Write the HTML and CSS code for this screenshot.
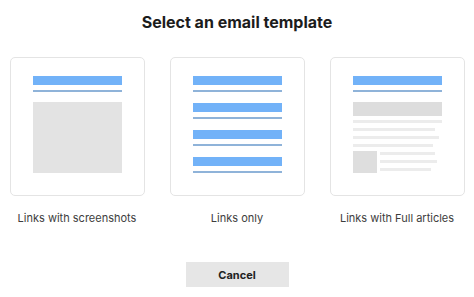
FILE: index.html
```html
<!DOCTYPE html>
<html>
<head>
<meta charset="utf-8">
<link rel="stylesheet" href="styles.css">
</head>
<body>
<div class="dialog">
  <h1 class="title">Select an email template</h1>
  <div class="options">
    <div class="option">
      <div class="card">
        <div class="bar"></div>
        <div class="thin"></div>
        <div class="shot"></div>
      </div>
      <div class="label">Links with screenshots</div>
    </div>
    <div class="option">
      <div class="card">
        <div class="group"><div class="bar"></div><div class="thin"></div></div>
        <div class="group"><div class="bar"></div><div class="thin"></div></div>
        <div class="group"><div class="bar"></div><div class="thin"></div></div>
        <div class="group"><div class="bar"></div><div class="thin"></div></div>
      </div>
      <div class="label">Links only</div>
    </div>
    <div class="option">
      <div class="card">
        <div class="bar"></div>
        <div class="thin"></div>
        <div class="headline"></div>
        <div class="lines">
          <div class="line" style="width:89px"></div>
          <div class="line" style="width:82px"></div>
          <div class="line" style="width:86px"></div>
          <div class="line" style="width:80px"></div>
        </div>
        <div class="media">
          <div class="thumb"></div>
          <div class="mlines">
            <div class="line" style="width:55px"></div>
            <div class="line" style="width:57px"></div>
            <div class="line" style="width:51px"></div>
          </div>
        </div>
      </div>
      <div class="label">Links with Full articles</div>
    </div>
  </div>
  <div class="actions">
    <button class="cancel">Cancel</button>
  </div>
</div>
</body>
</html>
```
FILE: styles.css
```css
html, body {
  margin: 0;
  padding: 0;
  background: #ffffff;
}
body {
  font-family: Inter, "Liberation Sans", sans-serif;
  width: 474px;
  height: 297px;
  overflow: hidden;
}
.dialog {
  display: flex;
  flex-direction: column;
  align-items: center;
}
.title {
  margin: 12px 0 0;
  font-size: 16px;
  line-height: 20px;
  font-weight: 700;
  color: #1c1c1c;
  letter-spacing: 0;
}
.options {
  display: flex;
  gap: 25px;
  margin-top: 25px;
}
.option {
  display: flex;
  flex-direction: column;
  align-items: center;
  width: 135px;
}
.card {
  box-sizing: border-box;
  width: 135px;
  height: 139px;
  border: 1px solid #e4e4e4;
  border-radius: 5px;
  padding: 18px 22px;
  display: flex;
  flex-direction: column;
}
.bar {
  height: 9px;
  background: #72b2f8;
}
.thin {
  height: 2px;
  margin-top: 5px;
  background: #8fb3d9;
}
.shot {
  margin-top: 10px;
  height: 71px;
  background: #e3e3e3;
}
.group + .group {
  margin-top: 11px;
}
.headline {
  margin-top: 10px;
  height: 14px;
  background: #dddddd;
}
.lines {
  display: flex;
  flex-direction: column;
  gap: 5px;
  margin-top: 4px;
}
.line {
  height: 3px;
  background: #ececec;
}
.media {
  display: flex;
  gap: 3px;
  margin-top: 4px;
}
.thumb {
  width: 24px;
  height: 22px;
  background: #dedede;
  flex: none;
}
.mlines {
  display: flex;
  flex-direction: column;
  gap: 5px;
  padding-top: 1px;
}
.label {
  margin-top: 15px;
  font-size: 11px;
  line-height: 14px;
  color: #3d3d3d;
  white-space: nowrap;
}
.actions {
  margin-top: 37px;
}
.cancel {
  width: 103px;
  height: 25px;
  border: none;
  border-radius: 0;
  background: #e6e6e6;
  font-family: Inter, "Liberation Sans", sans-serif;
  font-size: 11px;
  font-weight: 700;
  color: #222222;
  padding: 0;
}
```
